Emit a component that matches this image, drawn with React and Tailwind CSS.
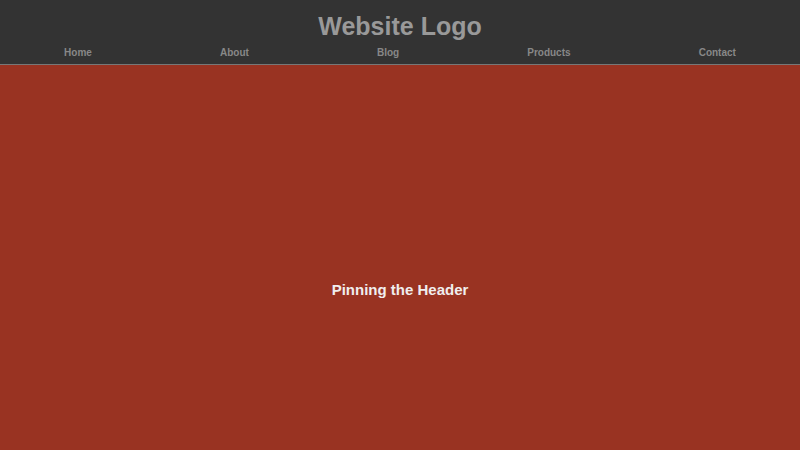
export default function App() {
  const links = ["Home", "About", "Blog", "Products", "Contact"];
  return (
    <div className="w-[800px] h-[450px] flex flex-col bg-[#993322] font-['Liberation_Sans',Arial,sans-serif]">
      <header className="h-[65px] bg-[#333333] border-b border-[#777777] flex flex-col items-center">
        <h1 className="mt-[10px] text-[25px] leading-[32px] font-bold text-[#999999]">Website Logo</h1>
        <nav className="w-full flex justify-around mt-[4px]">
          {links.map((l) => (
            <a key={l} className="text-[10px] leading-[13px] font-bold text-[#888888]">
              {l}
            </a>
          ))}
        </nav>
      </header>
      <main className="flex-1 flex justify-center pt-[214px]">
        <p className="text-[15px] leading-[22px] font-bold text-[#f0eeee]">Pinning the Header</p>
      </main>
    </div>
  );
}
